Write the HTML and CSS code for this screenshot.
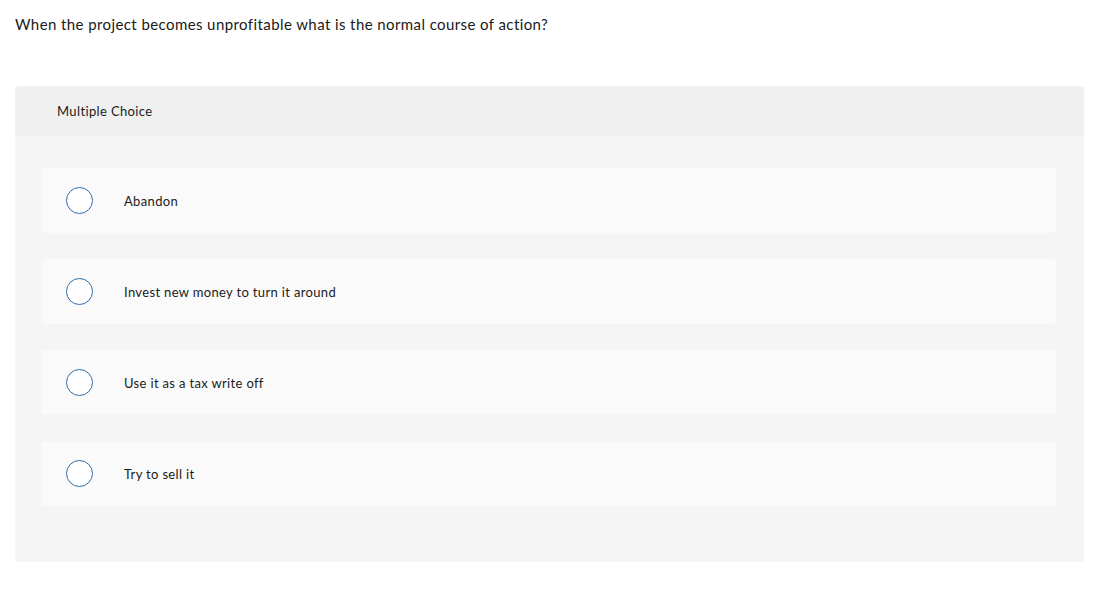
FILE: index.html
```html
<!DOCTYPE html>
<html>
<head>
<meta charset="utf-8">
<link rel="stylesheet" href="styles.css">
</head>
<body>
<p class="question">When the project becomes unprofitable what is the normal course of action?</p>
<div class="panel">
  <div class="panel-head">Multiple Choice</div>
  <div class="panel-body">
    <label class="option"><span class="radio"></span><span class="text">Abandon</span></label>
    <label class="option"><span class="radio"></span><span class="text">Invest new money to turn it around</span></label>
    <label class="option"><span class="radio"></span><span class="text">Use it as a tax write off</span></label>
    <label class="option"><span class="radio"></span><span class="text">Try to sell it</span></label>
  </div>
</div>
</body>
</html>
```
FILE: styles.css
```css
html, body {
  margin: 0;
  padding: 0;
  background: #ffffff;
}
body {
  font-family: "Lato", "Liberation Sans", sans-serif;
  color: #1a1a1a;
  padding: 14px 11px 0 15px;
}
.question {
  margin: 0;
  font-size: 15px;
  line-height: 20px;
  letter-spacing: 0.41px;
}
.panel {
  margin-top: 52px;
  border-radius: 3px;
  overflow: hidden;
  background: #f5f5f5;
}
.panel-head {
  height: 50px;
  background: #f0f0f0;
  padding-left: 42px;
  display: flex;
  align-items: center;
  font-size: 13px;
  letter-spacing: 0.37px;
}
.panel-body {
  padding: 32px 28px 56px 26px;
  display: flex;
  flex-direction: column;
  gap: 26px;
}
.option {
  height: 65px;
  background: #fafafa;
  border-radius: 4px;
  display: flex;
  align-items: center;
  padding-left: 25px;
}
.radio {
  width: 25px;
  height: 25px;
  border: 1.5px solid #2d6cae;
  border-radius: 50%;
  background: #ffffff;
  flex: none;
}
.text {
  margin-left: 31px;
  font-size: 13px;
  letter-spacing: 0.34px;
}
```
